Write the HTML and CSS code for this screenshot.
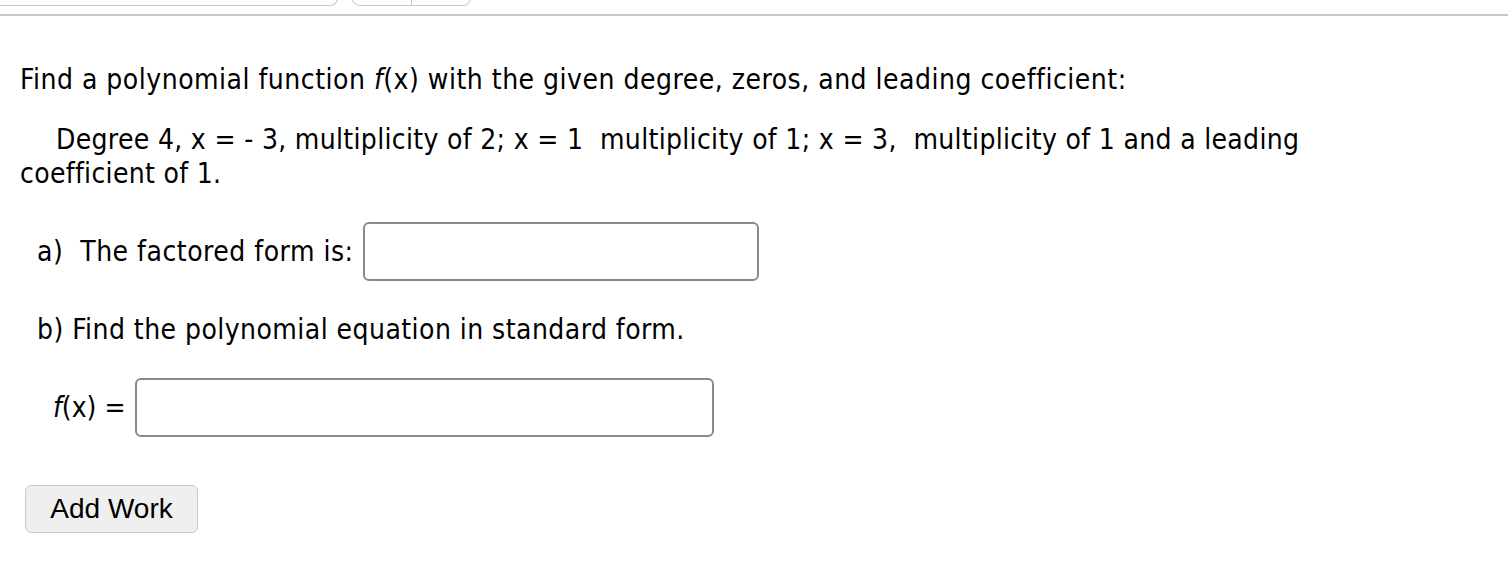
FILE: index.html
```
<!DOCTYPE html>
<html>
<head>
<meta charset="utf-8">
<link rel="stylesheet" href="styles.css">
</head>
<body>
<div class="topbar">
  <div class="tab-wide"></div>
  <div class="tab-split"><span class="seg"></span><span class="seg"></span></div>
</div>
<div class="rule"></div>
<div class="question">
  <p class="intro">Find a polynomial function <i>f</i>(x) with the given degree, zeros, and leading coefficient:</p>
  <p class="given">Degree 4, x = - 3, multiplicity of 2; x = 1 &nbsp;multiplicity of 1; x = 3, &nbsp;multiplicity of 1 and a leading coefficient of 1.</p>
  <div class="row part-a">
    <span class="label">a) &nbsp;The factored form is:</span>
    <input class="answer answer-a" type="text">
  </div>
  <p class="part-b">b) Find the polynomial equation in standard form.</p>
  <div class="row part-f">
    <span class="label"><i>f</i>(x) =</span>
    <input class="answer answer-f" type="text">
  </div>
  <button class="work" type="button">Add Work</button>
</div>
</body>
</html>
```
FILE: styles.css
```
html, body {
  margin: 0;
  padding: 0;
  background: #ffffff;
}
body {
  font-family: "DejaVu Sans Condensed", "DejaVu Sans", sans-serif;
  font-size: 28px;
  letter-spacing: 0.5px;
  color: #000000;
}
.topbar {
  display: flex;
  height: 6px;
  overflow: hidden;
  align-items: flex-end;
}
.tab-wide {
  width: 338px;
  height: 30px;
  border: 1.5px solid #c8c8c8;
  border-left: none;
  border-top: none;
  border-bottom-right-radius: 8px;
  box-sizing: border-box;
}
.tab-split {
  margin-left: 14px;
  width: 119px;
  height: 30px;
  display: flex;
  border: 1.5px solid #c8c8c8;
  border-top: none;
  border-radius: 0 0 8px 8px;
  box-sizing: border-box;
}
.seg {
  flex: 1;
}
.seg + .seg {
  border-left: 1.5px solid #c8c8c8;
}
.rule {
  margin-top: 8px;
  height: 2px;
  background: #c8c8c8;
}
.question {
  padding: 47px 0 0 20px;
  max-width: 1380px;
  line-height: 34px;
}
p {
  margin: 0;
}
.given {
  margin-top: 26px;
  text-indent: 36px;
  letter-spacing: 0.32px;
}
.row {
  display: flex;
  align-items: center;
}
.part-a {
  margin-top: 31px;
  padding-left: 17px;
}
.part-a .label {
  margin-right: 9px;
}
.part-b {
  margin-top: 32px;
  padding-left: 17px;
  letter-spacing: 0.45px;
}
.part-f {
  margin-top: 31px;
  padding-left: 33px;
}
.part-f .label {
  margin-right: 9px;
  letter-spacing: 0;
}
.answer {
  height: 59px;
  box-sizing: border-box;
  border: 2px solid #8a8a8a;
  border-radius: 6px;
  background: #ffffff;
  padding: 0 8px;
  font: inherit;
  outline: none;
}
.answer-a {
  width: 396px;
}
.answer-f {
  width: 579px;
}
.work {
  display: block;
  margin: 48px 0 30px 5px;
  width: 173px;
  height: 48px;
  box-sizing: border-box;
  background: #efefef;
  border: 1.5px solid #cbcbcb;
  border-radius: 6px;
  font-family: "Liberation Sans", Arial, sans-serif;
  font-size: 28px;
  letter-spacing: 0;
  color: #000000;
  padding: 0;
}
```
